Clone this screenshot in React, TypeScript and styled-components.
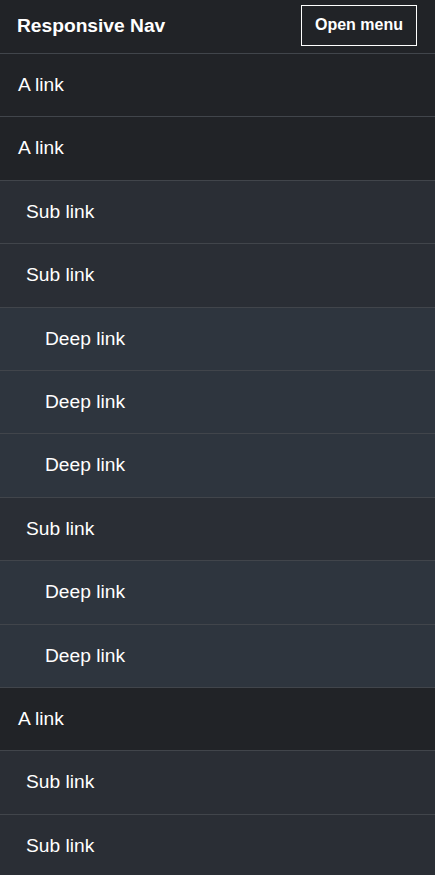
import React from "react";
import styled, { createGlobalStyle } from "styled-components";

const Global = createGlobalStyle`
	html, body {
		margin: 0;
		padding: 0;
		background: #212327;
	}
	body {
		font-family: "Liberation Sans", Arial, sans-serif;
		color: #fff;
	}
	* { box-sizing: border-box; }
`

const Header = styled.header`
	display: flex;
	align-items: center;
	justify-content: space-between;
	height: 54px;
	padding: 0 18px 0 17px;
	background: #212327;
	border-bottom: 1px solid #41454b;
`

const Title = styled.span`
	font-size: 19.2px;
	font-weight: bold;
	line-height: 22px;
	margin-top: -1px;
`

const MenuButton = styled.button`
	font-family: "Liberation Sans", Arial, sans-serif;
	font-size: 16px;
	font-weight: bold;
	line-height: 18px;
	color: #fff;
	background: transparent;
	border: 1px solid #fff;
	padding: 10px 13px 11px;
	margin-top: -2px;
	cursor: pointer;
`

const List = styled.ul`
	list-style: none;
	margin: 0;
	padding: 0;
`

const bg = ['#212327', '#2a2e35', '#2e353e']
const indent = [18, 26, 45]

const Item = styled.a<{ $level: number }>`
	display: block;
	padding: 20px 0 20px ${p => indent[p.$level]}px;
	font-size: 19.2px;
	line-height: 22.4px;
	color: #fff;
	text-decoration: none;
	background: ${p => bg[p.$level]};
	border-bottom: 1px solid #41454b;
`

type Link = { label: string, children?: Link[] }

const links: Link[] = [
	{ label: 'A link' },
	{
		label: 'A link', children: [
			{ label: 'Sub link' },
			{ label: 'Sub link', children: [{ label: 'Deep link' }, { label: 'Deep link' }, { label: 'Deep link' }] },
			{ label: 'Sub link', children: [{ label: 'Deep link' }, { label: 'Deep link' }] },
		]
	},
	{
		label: 'A link', children: [
			{ label: 'Sub link' },
			{ label: 'Sub link' },
		]
	},
]

function Links({ items, level }: { items: Link[], level: number }) {
	return <List>
		{items.map((l, i) => <li key={i}>
			<Item href="#" $level={level}>{l.label}</Item>
			{l.children && <Links items={l.children} level={level + 1} />}
		</li>)}
	</List>
}

export default function App() {
	return <>
		<Global />
		<nav>
			<Header>
				<Title>Responsive Nav</Title>
				<MenuButton>Open menu</MenuButton>
			</Header>
			<Links items={links} level={0} />
		</nav>
	</>
}
